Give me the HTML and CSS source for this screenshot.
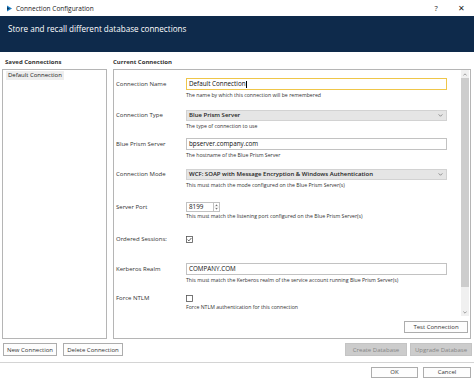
FILE: index.html
```html
<!DOCTYPE html>
<html lang="en">

<head>
    <meta charset="UTF-8">
    <title>Connection Configuration</title>
    <link rel="stylesheet" href="styles.css">
</head>

<body>
    <div class="window">
        <!-- Заголовок окна -->
        <div class="titlebar">
            <svg class="app-icon" viewBox="0 0 6 7" width="5" height="7">
                <path d="M0 0 L6 3.5 L0 7 Z" fill="#1f7fc4" />
                <path d="M0 1.8 L3 3.5 L0 5.2 Z" fill="#0c3559" />
            </svg>
            <span class="title">Connection Configuration</span>
            <span class="tb-btn">?</span>
            <span class="tb-btn close">✕</span>
        </div>

        <div class="banner">Store and recall different database connections</div>

        <!-- Основной контент -->
        <div class="content">
            <div class="group">
                <div class="group-label">Saved Connections</div>
                <div class="list-box">
                    <div class="list-item">Default Connection</div>
                </div>
            </div>

            <div class="group">
                <div class="group-label">Current Connection</div>
                <div class="panel">
                    <div class="panel-body">
                        <div class="form">
                            <div class="row row-name">
                                <label>Connection Name</label>
                                <div class="input focused">Default Connection<span class="caret"></span></div>
                                <div class="hint">The name by which this connection will be remembered</div>
                            </div>
                            <div class="row row-type">
                                <label>Connection Type</label>
                                <div class="select">Blue Prism Server
                                    <svg class="chevron" viewBox="0 0 6 4" width="5" height="3">
                                        <path d="M0.5 0.5 L3 3 L5.5 0.5" fill="none" stroke="#555" stroke-width="0.8" />
                                    </svg>
                                </div>
                                <div class="hint">The type of connection to use</div>
                            </div>
                            <div class="row row-server">
                                <label>Blue Prism Server</label>
                                <div class="input">bpserver.company.com</div>
                                <div class="hint">The hostname of the Blue Prism Server</div>
                            </div>
                            <div class="row row-mode">
                                <label>Connection Mode</label>
                                <div class="select">WCF: SOAP with Message Encryption &amp; Windows Authentication
                                    <svg class="chevron" viewBox="0 0 6 4" width="5" height="3">
                                        <path d="M0.5 0.5 L3 3 L5.5 0.5" fill="none" stroke="#555" stroke-width="0.8" />
                                    </svg>
                                </div>
                                <div class="hint">This must match the mode configured on the Blue Prism Server(s)</div>
                            </div>
                            <div class="row row-port">
                                <label>Server Port</label>
                                <div class="spin">
                                    <div class="input port">8199</div>
                                    <div class="spin-buttons">
                                        <svg viewBox="0 0 6 10" width="5" height="8">
                                            <path d="M1.5 3.5 L3 2 L4.5 3.5 Z" fill="#444" />
                                            <path d="M1.5 6.5 L3 8 L4.5 6.5 Z" fill="#444" />
                                            <path d="M0 5 H6" stroke="#bbb" stroke-width="0.6" />
                                        </svg>
                                    </div>
                                </div>
                                <div class="hint">This must match the listening port configured on the Blue Prism Server(s)</div>
                            </div>
                            <div class="row row-check row-ordered">
                                <label>Ordered Sessions:</label>
                                <svg class="checkbox" viewBox="0 0 7 7" width="7" height="7">
                                    <rect x="0.5" y="0.5" width="6" height="6" fill="#fff" stroke="#555" stroke-width="0.8" />
                                    <path d="M1.6 3.6 L2.9 4.9 L5.4 2" fill="none" stroke="#333" stroke-width="0.8" />
                                </svg>
                            </div>
                            <div class="row row-kerberos">
                                <label>Kerberos Realm</label>
                                <div class="input">COMPANY.COM</div>
                                <div class="hint">This must match the Kerberos realm of the service account running Blue Prism Server(s)</div>
                            </div>
                            <div class="row row-check">
                                <label>Force NTLM</label>
                                <svg class="checkbox" viewBox="0 0 7 7" width="7" height="7">
                                    <rect x="0.5" y="0.5" width="6" height="6" fill="#fff" stroke="#555" stroke-width="0.8" />
                                </svg>
                                <div class="hint">Force NTLM authentication for this connection</div>
                            </div>
                        </div>

                        <div class="scrollbar">
                            <div class="sb-arrow">
                                <svg viewBox="0 0 6 4" width="4" height="3">
                                    <path d="M0.5 3.5 L3 1 L5.5 3.5" fill="none" stroke="#666" stroke-width="0.9" />
                                </svg>
                            </div>
                            <div class="sb-thumb"></div>
                            <div class="sb-track"></div>
                            <div class="sb-arrow">
                                <svg viewBox="0 0 6 4" width="4" height="3">
                                    <path d="M0.5 0.5 L3 3 L5.5 0.5" fill="none" stroke="#666" stroke-width="0.9" />
                                </svg>
                            </div>
                        </div>
                    </div>
                    <div class="panel-actions">
                        <button class="button test-button">Test Connection</button>
                    </div>
                </div>
            </div>
        </div>

        <div class="action-row">
            <button class="button new-button">New Connection</button>
            <button class="button delete-button">Delete Connection</button>
            <span class="spacer"></span>
            <button class="button db-button" disabled>Create Database</button>
            <button class="button db-button" disabled>Upgrade Database</button>
        </div>

        <div class="separator"></div>

        <div class="footer">
            <button class="button ok-button">OK</button>
            <button class="button cancel-button">Cancel</button>
        </div>
    </div>
</body>

</html>
```

FILE: styles.css
```css
html,
body {
    height: 100%;
    margin: 0;
}

body {
    font-family: "Open Sans", "Noto Sans", sans-serif;
    background: #fff;
    color: #222;
}

.window {
    width: 474px;
    height: 380px;
    display: flex;
    flex-direction: column;
    overflow: hidden;
}

.titlebar {
    height: 16px;
    display: flex;
    align-items: center;
    padding: 0 3px 0 7px;
    font-size: 6.5px;
    color: #222;
}

.app-icon {
    margin-right: 4px;
}

.title {
    flex: 1;
}

.tb-btn {
    width: 20px;
    text-align: center;
    font-size: 7.5px;
}

.tb-btn.close {
    margin-left: 5px;
}

.banner {
    height: 36px;
    box-sizing: border-box;
    padding: 7px 8px 0;
    line-height: 12px;
    background: #0e2a4b;
    color: #fff;
    font-size: 8.1px;
}

.content {
    display: grid;
    grid-template-columns: 105px 358px;
    gap: 6px;
    padding: 0 3px 0 2px;
}

.group-label {
    height: 17px;
    box-sizing: border-box;
    padding: 5px 0 0 3px;
    line-height: 10px;
    font-size: 6px;
    font-weight: bold;
    color: #333;
}

.group + .group .group-label {
    padding-left: 0;
}

.list-box {
    height: 270px;
    box-sizing: border-box;
    border: 1px solid #b5b5b5;
    padding: 1px 3px;
    font-size: 6px;
    line-height: 9px;
}

.list-item {
    width: fit-content;
    padding: 0 2px;
    background: #eeeeee;
    color: #222;
}

.panel {
    height: 270px;
    box-sizing: border-box;
    border: 1px solid #b5b5b5;
    display: flex;
    flex-direction: column;
}

.panel-body {
    height: 246px;
    display: flex;
}

.form {
    flex: 1;
    padding: 8px 14px 0 2px;
    font-size: 6px;
}

.row {
    display: grid;
    grid-template-columns: 70px 1fr;
    grid-template-rows: 12px auto;
    align-items: center;
    align-content: start;
}

.row label {
    color: #333;
}

.row .hint {
    grid-column: 2;
    margin-top: 2px;
    line-height: 7px;
    font-size: 5.2px;
    color: #333;
}

.row-name { height: 31px; }
.row-type { height: 29px; }
.row-server { height: 30px; }
.row-mode { height: 34px; }
.row-port { height: 33px; grid-template-rows: 10px auto; }
.row-ordered { height: 28px; }
.row-kerberos { height: 31px; }

.row-check {
    grid-template-rows: 8px auto;
}

.row-port .hint {
    margin-top: 1px;
}

.input {
    height: 12px;
    box-sizing: border-box;
    border: 1px solid #c2c2c2;
    padding: 0 2px;
    line-height: 10px;
    font-size: 6.3px;
    color: #111;
    background: #fff;
}

.input.focused {
    border-color: #efc649;
}

.caret {
    display: inline-block;
    width: 0;
    height: 7px;
    border-left: 0.6px solid #000;
    vertical-align: middle;
}

.select {
    height: 11px;
    box-sizing: border-box;
    border: 1px solid #d2d2d2;
    background: #e5e5e5;
    padding: 0 2px;
    line-height: 9px;
    font-size: 6px;
    font-weight: 600;
    color: #222;
    display: flex;
    align-items: center;
    justify-content: space-between;
}

.chevron {
    margin-right: 1px;
}

.spin {
    display: flex;
    height: 10px;
}

.input.port {
    width: 28px;
    height: 10px;
    line-height: 8px;
}

.spin-buttons {
    width: 6px;
    height: 10px;
    box-sizing: border-box;
    border: 1px solid #c2c2c2;
    border-left: none;
    display: flex;
    align-items: center;
    justify-content: center;
}

.checkbox {
    display: block;
}

.scrollbar {
    width: 8px;
    margin-right: 1px;
    display: flex;
    flex-direction: column;
    background: #f0f0f0;
}

.sb-arrow {
    height: 8px;
    display: flex;
    align-items: center;
    justify-content: center;
}

.sb-thumb {
    height: 209px;
    background: #cdcdcd;
}

.sb-track {
    flex: 1;
}

.panel-actions {
    display: flex;
    justify-content: flex-end;
    padding: 5px 2px 0 0;
}

.button {
    height: 12px;
    box-sizing: border-box;
    padding: 0;
    border: 1px solid #adadad;
    background: #fdfdfd;
    font-family: inherit;
    font-size: 6px;
    line-height: 10px;
    color: #333;
}

.test-button {
    width: 64px;
}

.action-row {
    display: flex;
    align-items: center;
    gap: 6px;
    margin-top: 4px;
    padding: 0 2px 0 3px;
}

.action-row .button {
    height: 13px;
}

.new-button {
    width: 54px;
}

.delete-button {
    width: 60px;
}

.spacer {
    flex: 1;
}

.db-button {
    width: 62px;
    background: #cccccc;
    border-color: #c4c4c4;
    color: #858585;
}

.db-button + .db-button {
    margin-left: -3px;
}

.separator {
    margin-top: 6px;
    border-top: 1px solid #d4d4d4;
}

.footer {
    display: flex;
    justify-content: flex-end;
    gap: 5px;
    padding: 4px 3px 0 0;
}

.footer .button {
    height: 11px;
    line-height: 9px;
}

.ok-button {
    width: 47px;
}

.cancel-button {
    width: 48px;
}
```
